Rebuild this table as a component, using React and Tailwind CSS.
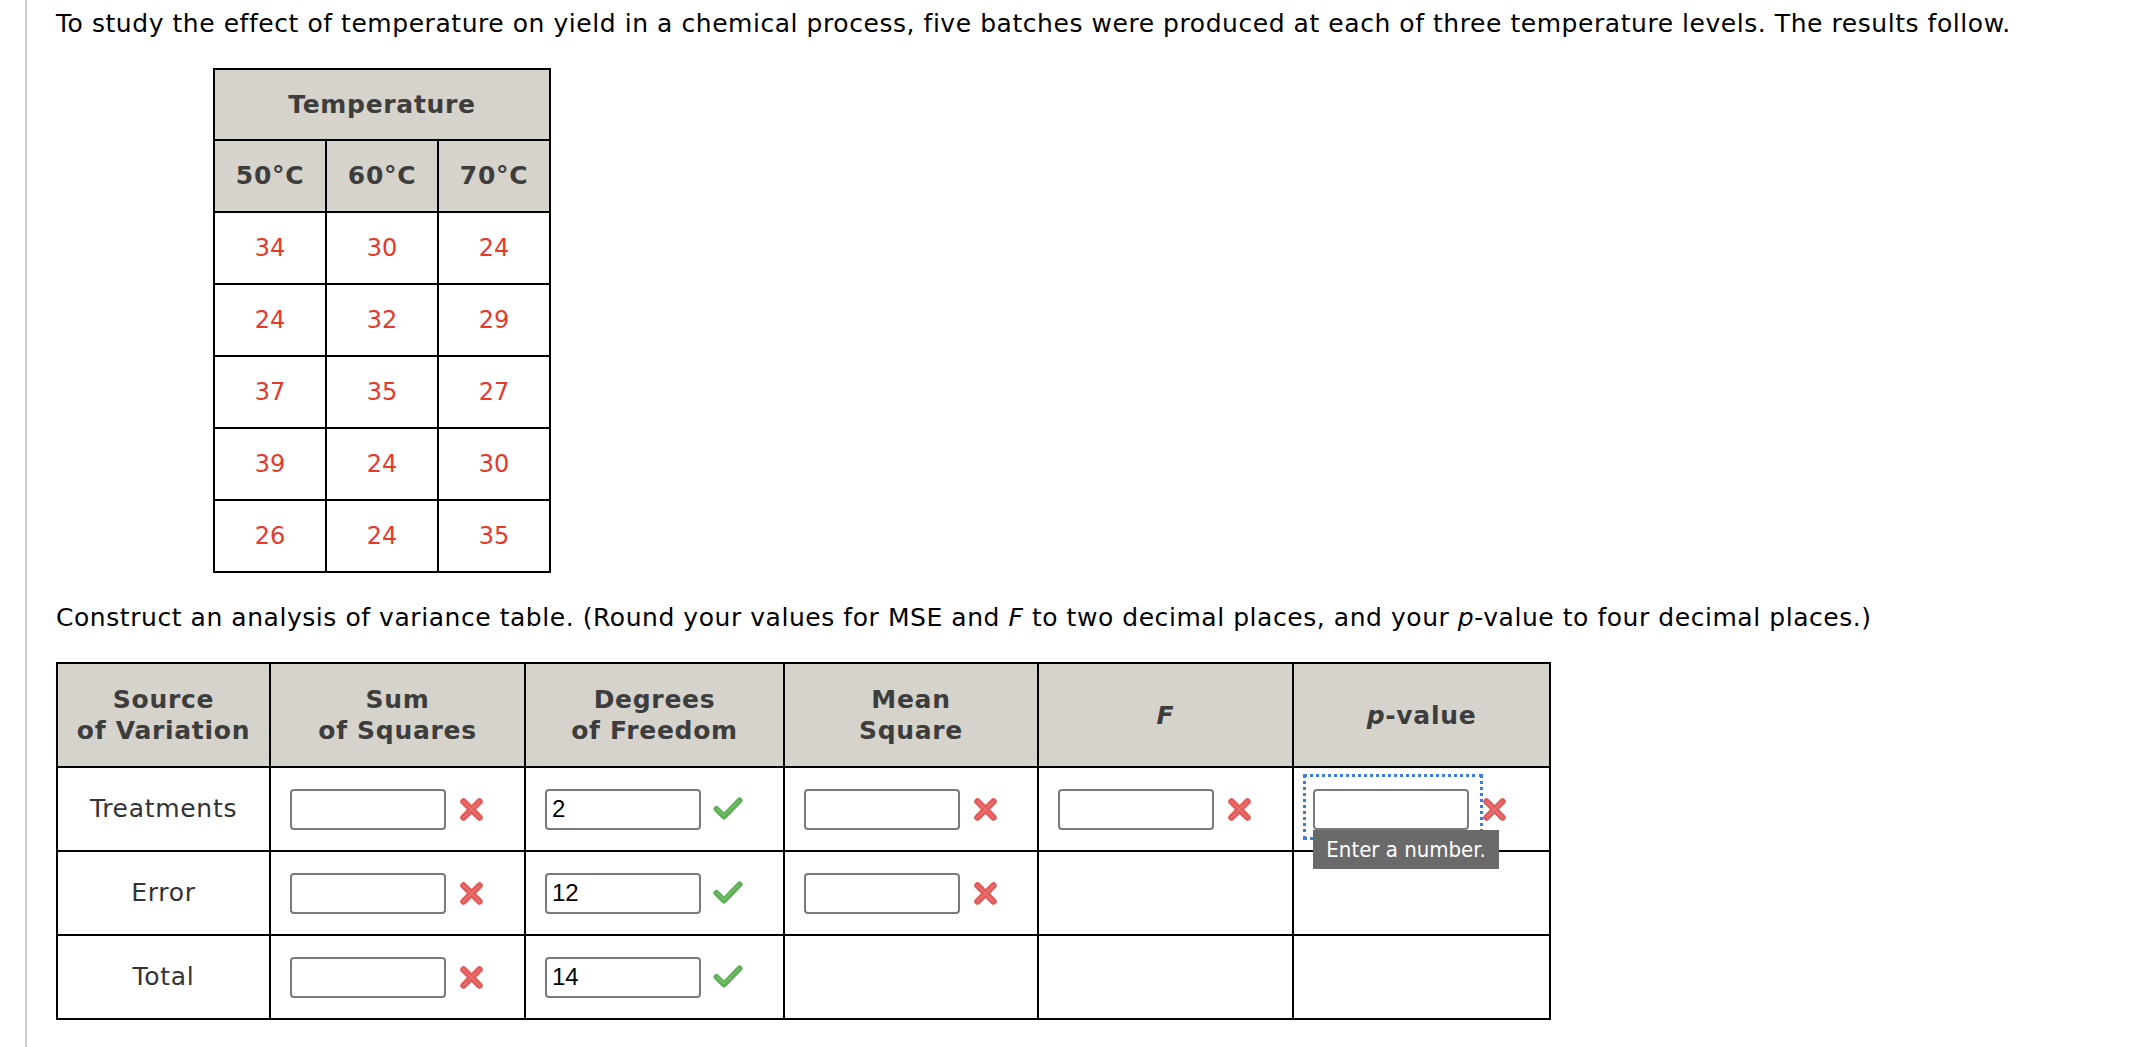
import React from "react";

const XIcon = () => (
  <svg width="27" height="27" viewBox="0 0 27 27" className="shrink-0">
    <path d="M5.5 5.5 L21.5 21.5 M21.5 5.5 L5.5 21.5" stroke="#e05a5a" strokeWidth="6.5" strokeLinecap="round" />
    <path d="M5.5 5.5 L21.5 21.5 M21.5 5.5 L5.5 21.5" stroke="#ee7b7b" strokeWidth="2" strokeLinecap="round" opacity="0.6" />
  </svg>
);

const Check = () => (
  <svg width="30" height="26" viewBox="0 0 30 26" className="shrink-0">
    <path d="M3.5 13 L11 20.5 L26.5 4.5" stroke="#5fae57" strokeWidth="6" strokeLinecap="round" strokeLinejoin="round" fill="none" />
    <path d="M4.5 13.5 L11 19.5 L25.5 5" stroke="#7cc673" strokeWidth="1.6" strokeLinecap="round" strokeLinejoin="round" fill="none" opacity="0.7" />
  </svg>
);

const Input = ({ value }) => (
  <div className="w-[156px] h-[41px] shrink-0 rounded-[4px] border-2 border-[#7a7a7a] bg-white flex items-center pl-[5px] text-[24px] text-black font-['Liberation_Sans',sans-serif]">
    {value}
  </div>
);

const Field = ({ value, ok }) => (
  <div className="flex items-center gap-[12px] pl-[19px]">
    <Input value={value} />
    {ok ? <Check /> : <XIcon />}
  </div>
);

const tempRows = [
  [34, 30, 24],
  [24, 32, 29],
  [37, 35, 27],
  [39, 24, 30],
  [26, 24, 35],
];

const hc = "bg-[#d6d3cc] border-r-2 border-b-2 border-black flex items-center justify-center text-center font-bold text-[#3d3d3d] text-[25px] tracking-[0.7px]";
const bc = "border-r-2 border-b-2 border-black flex items-center";
const lc = "border-r-2 border-b-2 border-black flex items-center justify-center text-[#333] text-[25px] tracking-[0.7px]";

export default function App() {
  return (
    <div className="min-h-[1047px] bg-white font-['DejaVu_Sans',Verdana,sans-serif] text-black">
      <div className="ml-[25px] min-h-[1047px] border-l-2 border-[#cccccc] pl-[29px] pt-[8px]">
        <p className="text-[25px] leading-[32px] tracking-[0.55px]">
          To study the effect of temperature on yield in a chemical process, five batches were produced at each of three temperature levels. The results follow.
        </p>

        <div className="mt-[28px] ml-[157px] w-[338px] border-l-2 border-t-2 border-black grid grid-cols-[112px_112px_112px] text-[24px]">
          <div className={`${hc} col-span-3 h-[71px]`}>Temperature</div>
          <div className={`${hc} h-[72px]`}>50°C</div>
          <div className={`${hc} h-[72px]`}>60°C</div>
          <div className={`${hc} h-[72px]`}>70°C</div>
          {tempRows.flat().map((v, i) => (
            <div key={i} className={`${bc} h-[72px] justify-center text-[#e5392a]`}>
              {v}
            </div>
          ))}
        </div>

        <p className="mt-[29px] text-[25px] leading-[32px] tracking-[0.55px]">
          Construct an analysis of variance table. (Round your values for MSE and <i>F</i> to two decimal places, and your <i>p</i>-value to four decimal places.)
        </p>

        <div className="mt-[28px] w-[1495px] border-l-2 border-t-2 border-black grid grid-cols-[213px_255px_259px_254px_255px_257px]">
          <div className={`${hc} h-[104px] leading-[31px]`}>Source<br />of Variation</div>
          <div className={`${hc} h-[104px] leading-[31px]`}>Sum<br />of Squares</div>
          <div className={`${hc} h-[104px] leading-[31px]`}>Degrees<br />of Freedom</div>
          <div className={`${hc} h-[104px] leading-[31px]`}>Mean<br />Square</div>
          <div className={`${hc} h-[104px] leading-[31px]`}><i>F</i></div>
          <div className={`${hc} h-[104px] leading-[31px]`}><span><i>p</i>-value</span></div>

          <div className={`${lc} h-[84px]`}>Treatments</div>
          <div className={`${bc} h-[84px]`}><Field /></div>
          <div className={`${bc} h-[84px]`}><Field value="2" ok /></div>
          <div className={`${bc} h-[84px]`}><Field /></div>
          <div className={`${bc} h-[84px]`}><Field /></div>
          <div className={`${bc} h-[84px] relative`}>
            <div className="absolute left-[9px] top-[6px] w-[180px] h-[66px] border-[3px] border-dotted border-[#3b7ddd]"></div>
            <div className="relative"><Field /></div>
            <div className="absolute left-[19px] top-[62px] w-[186px] h-[39px] bg-[#6a6a6a] text-white text-[22px] flex items-center justify-center z-10 font-['DejaVu_Sans_Condensed','DejaVu_Sans',sans-serif]">
              Enter a number.
            </div>
          </div>

          <div className={`${lc} h-[84px]`}>Error</div>
          <div className={`${bc} h-[84px]`}><Field /></div>
          <div className={`${bc} h-[84px]`}><Field value="12" ok /></div>
          <div className={`${bc} h-[84px]`}><Field /></div>
          <div className={`${bc} h-[84px]`}></div>
          <div className={`${bc} h-[84px]`}></div>

          <div className={`${lc} h-[84px]`}>Total</div>
          <div className={`${bc} h-[84px]`}><Field /></div>
          <div className={`${bc} h-[84px]`}><Field value="14" ok /></div>
          <div className={`${bc} h-[84px]`}></div>
          <div className={`${bc} h-[84px]`}></div>
          <div className={`${bc} h-[84px]`}></div>
        </div>
      </div>
    </div>
  );
}
